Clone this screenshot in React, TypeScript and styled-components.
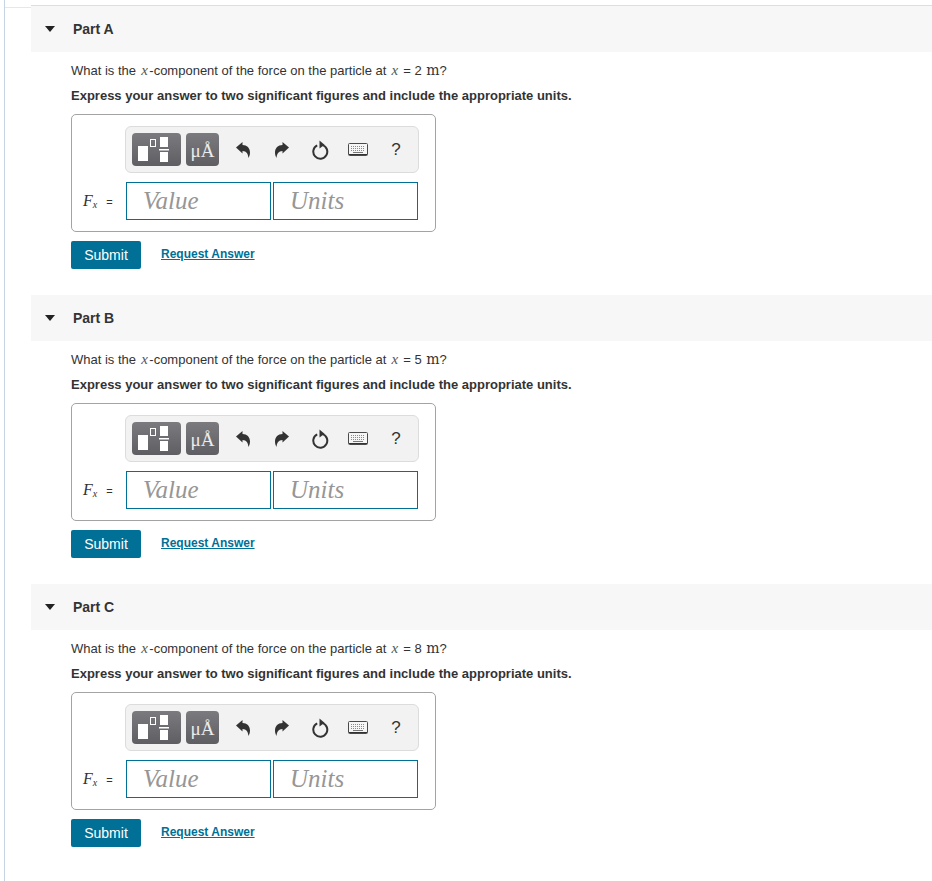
import React from 'react';
import styled, { createGlobalStyle } from 'styled-components';

const GlobalStyle = createGlobalStyle`
  html, body {
    margin: 0;
    padding: 0;
    background: #ffffff;
    font-family: "Liberation Sans", Arial, sans-serif;
    color: #333333;
  }
`;

const Page = styled.div`
  position: relative;
  box-sizing: border-box;
  width: 928px;
  height: 881px;
  margin-left: 4px;
  padding: 5px 0 0 26px;
  border-left: 1px solid #c5d5e6;
  overflow: hidden;
`;

// short rule that runs from the left line to the first part
const TopTick = styled.div`
  position: absolute;
  left: 0;
  top: 7px;
  width: 26px;
  height: 1px;
  background: #e3e8ee;
`;

const Part = styled.section<{ $first?: boolean }>`
  height: ${(p) => (p.$first ? '290px' : '289px')};
`;

const PartHeader = styled.div<{ $first?: boolean }>`
  box-sizing: border-box;
  height: ${(p) => (p.$first ? '47px' : '46px')};
  display: flex;
  align-items: center;
  background: #f7f7f7;
  border-top: ${(p) => (p.$first ? '1px solid #dedede' : 'none')};
  font-size: 14px;
  font-weight: 700;
  color: #333333;
`;

const Caret = styled.span`
  width: 0;
  height: 0;
  margin: 0 18px 0 14px;
  border-left: 5px solid transparent;
  border-right: 5px solid transparent;
  border-top: 6px solid #222222;
`;

const PartBody = styled.div`
  padding: 11px 0 0 40px;
`;

const Question = styled.p`
  margin: 0;
  height: 16px;
  font-size: 13px;
  line-height: 16px;
  color: #333333;
`;

const MathVar = styled.i`
  font-family: "Liberation Serif", serif;
  font-size: 15px;
  line-height: 0;
  margin: 0 1.5px;
  color: #555555;
`;

const MathUnit = styled.span`
  font-family: "DejaVu Serif", "Liberation Serif", serif;
  font-size: 14px;
  line-height: 0;
  margin-left: 1px;
`;

const Instruction = styled.p`
  margin: 9px 0 0;
  height: 16px;
  font-size: 13px;
  line-height: 16px;
  font-weight: 700;
  color: #333333;
`;

const AnswerBox = styled.div`
  box-sizing: border-box;
  width: 365px;
  height: 118px;
  margin-top: 10px;
  padding: 11px 15px 0 0;
  background: #ffffff;
  border: 1px solid #a3a3a3;
  border-radius: 5px;
`;

const Toolbar = styled.div`
  box-sizing: border-box;
  display: flex;
  align-items: center;
  width: 294px;
  height: 47px;
  margin-left: 53px;
  padding-left: 6px;
  background: #f2f2f2;
  border: 1px solid #dcdcdc;
  border-radius: 6px;
`;

const TemplateButton = styled.div<{ $width: number }>`
  display: flex;
  align-items: center;
  justify-content: center;
  width: ${(p) => p.$width}px;
  height: 33px;
  margin-right: 5px;
  border-radius: 4px;
  background: linear-gradient(#7b7b7f, #5f5f63);
`;

const UnitsGlyph = styled.span`
  font-family: "Liberation Serif", serif;
  font-size: 19px;
  line-height: 1;
  color: #ececec;
  margin-top: 1px;
`;

const ToolSlot = styled.div<{ $left: number }>`
  display: flex;
  align-items: center;
  justify-content: center;
  width: 20px;
  height: 24px;
  margin-left: ${(p) => p.$left}px;
  color: #333333;
`;

const HelpMark = styled.span`
  font-size: 17px;
  line-height: 1;
  color: #333333;
`;

const AnswerRow = styled.div`
  display: flex;
  align-items: center;
  margin-top: 9px;
`;

const Symbol = styled.div`
  display: flex;
  align-items: baseline;
  flex-shrink: 0;
  width: 54px;
  padding-left: 11px;
  box-sizing: border-box;
  font-family: "Liberation Serif", serif;
  font-size: 16px;
  color: #333333;
`;

const SymbolSub = styled.i`
  font-size: 10px;
  margin-right: 9px;
  transform: translateY(2px);
`;

const Equals = styled.span`
  font-family: "Liberation Sans", sans-serif;
  font-size: 11px;
`;

const Field = styled.div<{ $width: number; $pad: number }>`
  box-sizing: border-box;
  flex-shrink: 0;
  width: ${(p) => p.$width}px;
  height: 38px;
  margin-right: 2px;
  padding-left: ${(p) => p.$pad}px;
  border: 1px solid #007096;
  background: #ffffff;
  font-family: "Liberation Serif", serif;
  font-style: italic;
  font-size: 25px;
  line-height: 36px;
  color: #969696;
`;

const Actions = styled.div`
  display: flex;
  align-items: center;
  margin-top: 9px;
`;

const SubmitButton = styled.button`
  width: 70px;
  height: 28px;
  padding: 0;
  border: none;
  border-radius: 2px;
  background: #007096;
  color: #ffffff;
  font-family: "Liberation Sans", Arial, sans-serif;
  font-size: 14px;
`;

const RequestLink = styled.a`
  margin: -2px 0 0 20px;
  font-size: 12px;
  font-weight: 700;
  color: #007096;
  text-decoration: underline;
`;

const FractionIcon = () => (
  <svg width="38" height="25" viewBox="0 0 38 25">
    <rect x="0" y="9" width="10" height="15" fill="#fff" />
    <rect x="12.5" y="2.5" width="5" height="7" fill="none" stroke="#fff" />
    <rect x="22" y="0" width="8" height="10" fill="#fff" />
    <rect x="21" y="12" width="10" height="1.5" fill="#fff" />
    <rect x="22" y="15" width="8" height="10" fill="#fff" />
  </svg>
);

const UndoIcon = ({ flip }: { flip?: boolean }) => (
  <svg width="14" height="16" viewBox="0 0 14 16" style={flip ? { transform: 'scaleX(-1)' } : undefined}>
    <path d="M0 5.5 L6.5 0 V3 C11 3 14 6 14 10.5 C14 12.5 13.4 14.5 12.4 16 C12.2 12 10.5 9 6.5 9 V11.5 Z" fill="#333" />
  </svg>
);

const ResetIcon = () => (
  <svg width="17" height="20" viewBox="0 0 17 20">
    <path d="M5.2 5.4 A7 7 0 1 0 10 4.9" fill="none" stroke="#333" strokeWidth="2" />
    <path d="M7.5 0.5 L12.5 4.8 L7.5 8.5 Z" fill="#333" />
  </svg>
);

const keyColumns = [3, 5, 7, 9, 11, 13, 15];

const KeyboardIcon = () => (
  <svg width="20" height="13" viewBox="0 0 20 13" style={{ marginLeft: -2 }}>
    <rect x="0.5" y="0.5" width="19" height="12" rx="1" fill="#f6f6f6" stroke="#4a4a4a" />
    {keyColumns.map((x) => (
      <g key={x} fill="#8a8a8a">
        <rect x={x} y="3" width="1" height="1" />
        <rect x={x} y="5" width="1" height="1" />
        <rect x={x} y="7" width="1" height="1" />
      </g>
    ))}
    <rect x="5" y="9" width="10" height="1" fill="#777" />
    <rect x="1" y="11" width="18" height="1" fill="#333" />
  </svg>
);

const parts = [
  { name: 'Part A', at: '2' },
  { name: 'Part B', at: '5' },
  { name: 'Part C', at: '8' },
];

export default function App(): JSX.Element {
  return (
    <>
      <GlobalStyle />
      <Page>
        <TopTick />
        {parts.map((part, i) => (
          <Part key={part.name} $first={i === 0}>
            <PartHeader $first={i === 0}>
              <Caret />
              {part.name}
            </PartHeader>
            <PartBody>
              <Question>
                What is the <MathVar>x</MathVar>-component of the force on the particle at <MathVar>x</MathVar> = {part.at} <MathUnit>m</MathUnit>?
              </Question>
              <Instruction>Express your answer to two significant figures and include the appropriate units.</Instruction>
              <AnswerBox>
                <Toolbar>
                  <TemplateButton $width={49}>
                    <FractionIcon />
                  </TemplateButton>
                  <TemplateButton $width={33}>
                    <UnitsGlyph>μÅ</UnitsGlyph>
                  </TemplateButton>
                  <ToolSlot $left={9}><UndoIcon /></ToolSlot>
                  <ToolSlot $left={19}><UndoIcon flip /></ToolSlot>
                  <ToolSlot $left={18}><ResetIcon /></ToolSlot>
                  <ToolSlot $left={19}><KeyboardIcon /></ToolSlot>
                  <ToolSlot $left={17}><HelpMark>?</HelpMark></ToolSlot>
                </Toolbar>
                <AnswerRow>
                  <Symbol>
                    <i>F</i>
                    <SymbolSub>x</SymbolSub>
                    <Equals>=</Equals>
                  </Symbol>
                  <Field $width={145} $pad={16}>Value</Field>
                  <Field $width={145} $pad={16}>Units</Field>
                </AnswerRow>
              </AnswerBox>
              <Actions>
                <SubmitButton>Submit</SubmitButton>
                <RequestLink>Request Answer</RequestLink>
              </Actions>
            </PartBody>
          </Part>
        ))}
      </Page>
    </>
  );
}
